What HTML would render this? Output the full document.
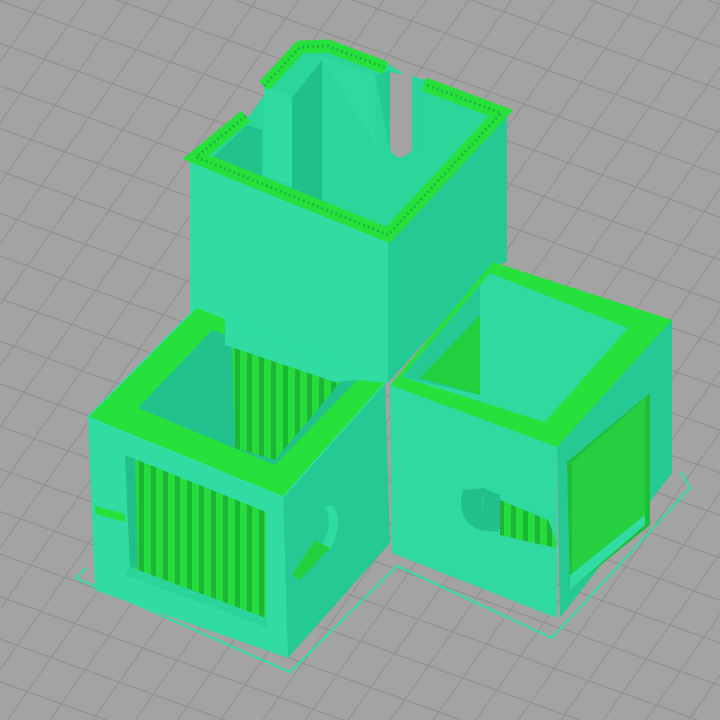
<!DOCTYPE html>
<html><head><meta charset="utf-8"><style>
html,body{margin:0;padding:0;width:720px;height:720px;overflow:hidden;background:#a2a2a2}
svg{display:block}
</style></head><body>
<svg width="720" height="720" viewBox="0 0 720 720" xmlns="http://www.w3.org/2000/svg">
<defs>
<pattern id="vs" width="12" height="12" patternUnits="userSpaceOnUse">
<rect width="12" height="12" fill="#1cb535"/><rect width="7" height="12" fill="#25dc3c"/>
</pattern>
<pattern id="gl" x="0" y="0" width="34" height="34" patternUnits="userSpaceOnUse" patternTransform="matrix(1 0.36 -0.7 1 0 0)">
<rect width="34" height="34" fill="#a3a3a3"/>
<path d="M0 0.5 H34 M0.5 0 V34" stroke="#909090" stroke-width="1.1"/>
</pattern>
</defs>
<rect width="720" height="720" fill="url(#gl)"/>
<path d="M681 472 L690 488 L552 638 L397 566 L290 672 L76 578 L86 568" fill="none" stroke="#2fe0a0" stroke-width="2"/>

<!-- TOWER -->
<polygon points="200,160 250,115 300,45 390,65 420,85 500,112 388,235" fill="#2bd69b"/>
<path d="M390 72 L412 76 L412 150 Q400 165 390 150 Z" fill="#a3a3a3"/>
<polygon points="264,86 292,98 292,185 264,175" fill="#30dca2"/>
<polygon points="292,98 322,60 322,205 292,195" fill="#21c08b"/>
<polygon points="322,58 375,76 375,145 Q385 162 400 158 L400 215 L322,200" fill="#2fd9a0"/>
<polygon points="375,76 390,70 390,150 Q382 150 375,145" fill="#24c994"/>
<path d="M264 86 L300 47 L328 46 L386 68" fill="none" stroke="#26e03c" stroke-width="13" stroke-linejoin="round"/>
<path d="M264 86 L300 47 L328 46 L386 68" fill="none" stroke="#1eb93a" stroke-width="3" stroke-dasharray="2 3"/>
<polygon points="412,76 425,80 425,150 412,150" fill="#2ad49b"/>
<polygon points="388,242 507,110 507,262 493,266 388,383" fill="#24c994"/>
<polygon points="190,158 388,242 388,383 225,345 225,318 197,310 190,312" fill="#30dca2"/>
<polygon points="210,160 247,125 262,130 262,180 225,170" fill="#22c28c"/>
<path d="M246 116 L196 157 L388 235 L501 113 L424 84" fill="none" stroke="#26e03c" stroke-width="14" stroke-linejoin="miter"/>
<path d="M246 116 L196 157 L388 235 L501 113 L424 84" fill="none" stroke="#1eb93a" stroke-width="3" stroke-dasharray="2 3"/>

<!-- RIGHT CUBE -->
<polygon points="390,385 493,262 672,320 557,447" fill="#26e03c"/>
<polygon points="402,377 490,273 628,328 545,422" fill="#2fd9a0"/>
<polygon points="402,377 480,285 480,395" fill="#24c994"/>
<polygon points="420,378 480,315 480,395" fill="#22cf3e"/>
<polygon points="390,385 557,447 557,618 392,553" fill="#2fd9a0"/>
<path d="M463 490 Q455 520 480 530 L500 532 Q475 515 485 488 Z" fill="#22bf8a"/>
<polygon points="483,488 500,495 500,530 483,525" fill="#21c08b"/>
<polygon points="500,500 548,520 556,540 556,548 500,535" fill="url(#vs)"/>
<polygon points="557,447 672,320 672,473 560,618" fill="#24c994"/>
<polygon points="567,462 650,393 650,525 570,590" fill="#1fbd3a"/>
<polygon points="572,462 645,398 645,515 572,575" fill="#25cf40"/>
<polygon points="570,575 645,515 645,525 570,590" fill="#30dca2"/>

<!-- LEFT CUBE -->
<polygon points="283,497 385,383 390,543 288,658" fill="#24c994"/>
<path d="M332 505 Q345 520 330 550 L320 548 Q335 525 325 507 Z" fill="#2fdba0"/>
<polygon points="315,540 330,548 300,580 292,575" fill="#22cf3e"/>
<polygon points="88,417 283,497 288,658 95,590" fill="#30dca2"/>
<polygon points="125,455 266,512 266,618 130,567" fill="url(#vs)"/>
<polygon points="125,455 135,459 138,568 130,567" fill="#21c08b"/>
<polygon points="130,567 266,618 268,628 125,575" fill="#2ad49b"/>
<polygon points="95,506 125,514 125,522 95,514" fill="#26e03c"/>
<polygon points="88,417 197,307 385,383 283,497" fill="#26e03c"/>
<polygon points="138,408 212,330 357,380 275,465" fill="#22c28c"/>
<polygon points="232,345 340,382 330,395 275,460 235,448" fill="url(#vs)"/>
<polygon points="225,318 388,375 388,383 357,380 335,382 225,345" fill="#30dca2"/>
<polygon points="88,417 197,307 385,383 283,497" fill="none" stroke="#2fe0a0" stroke-width="1.5"/>
</svg>
</body></html>
